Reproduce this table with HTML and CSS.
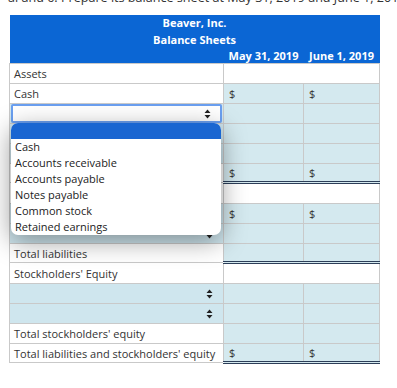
FILE: index.html
```html
<!DOCTYPE html>
<html>
<head>
<meta charset="utf-8">
<link rel="stylesheet" href="styles.css">
</head>
<body>
<div class="leadwrap"><p class="lead">al and 6. Prepare its balance sheet at May 31, 2019 and June 1, 2019.</p></div>
<div class="wrap">
  <table class="bs">
    <colgroup><col class="c1"><col class="c2"><col class="c3"></colgroup>
    <thead>
      <tr class="trow"><th colspan="3">Beaver, Inc.<br>Balance Sheets</th></tr>
      <tr class="drow"><th></th><th>May 31, 2019</th><th>June 1, 2019</th></tr>
    </thead>
    <tbody>
      <tr><td class="lbl">Assets</td><td colspan="2" class="blank"></td></tr>
      <tr><td class="lbl">Cash</td><td class="amt">$</td><td class="amt">$</td></tr>
      <tr><td class="sel"><div class="box focus"><svg class="arr" width="7" height="10" viewBox="0 0 7 10"><path d="M3.5 0.5L6.5 4H0.5Z M3.5 9.5L6.5 6H0.5Z" fill="#222"/></svg></div></td><td class="amt"></td><td class="amt"></td></tr>
      <tr><td class="sel"><div class="box"><svg class="arr" width="7" height="10" viewBox="0 0 7 10"><path d="M3.5 0.5L6.5 4H0.5Z M3.5 9.5L6.5 6H0.5Z" fill="#222"/></svg></div></td><td class="amt"></td><td class="amt"></td></tr>
      <tr><td class="sel"><div class="box"><svg class="arr" width="7" height="10" viewBox="0 0 7 10"><path d="M3.5 0.5L6.5 4H0.5Z M3.5 9.5L6.5 6H0.5Z" fill="#222"/></svg></div></td><td class="amt"></td><td class="amt"></td></tr>
      <tr class="dr"><td class="lbl">Total assets</td><td class="amt tot dbl">$</td><td class="amt tot dbl">$</td></tr>
      <tr><td class="lbl">Liabilities</td><td colspan="2" class="blank"></td></tr>
      <tr><td class="sel"><div class="box"><svg class="arr" width="7" height="10" viewBox="0 0 7 10"><path d="M3.5 0.5L6.5 4H0.5Z M3.5 9.5L6.5 6H0.5Z" fill="#222"/></svg></div></td><td class="amt">$</td><td class="amt">$</td></tr>
      <tr><td class="sel"><div class="box"><svg class="arr" width="7" height="10" viewBox="0 0 7 10"><path d="M3.5 0.5L6.5 4H0.5Z M3.5 9.5L6.5 6H0.5Z" fill="#222"/></svg></div></td><td class="amt"></td><td class="amt"></td></tr>
      <tr class="dr"><td class="lbl">Total liabilities</td><td class="amt tot dbl"></td><td class="amt tot dbl"></td></tr>
      <tr><td class="lbl">Stockholders' Equity</td><td colspan="2" class="blank"></td></tr>
      <tr><td class="sel"><div class="box"><svg class="arr" width="7" height="10" viewBox="0 0 7 10"><path d="M3.5 0.5L6.5 4H0.5Z M3.5 9.5L6.5 6H0.5Z" fill="#222"/></svg></div></td><td class="amt"></td><td class="amt"></td></tr>
      <tr><td class="sel"><div class="box"><svg class="arr" width="7" height="10" viewBox="0 0 7 10"><path d="M3.5 0.5L6.5 4H0.5Z M3.5 9.5L6.5 6H0.5Z" fill="#222"/></svg></div></td><td class="amt tot"></td><td class="amt tot"></td></tr>
      <tr><td class="lbl">Total stockholders' equity</td><td class="amt tot"></td><td class="amt tot"></td></tr>
      <tr class="dr"><td class="lbl">Total liabilities and stockholders' equity</td><td class="amt tot dbl">$</td><td class="amt tot dbl">$</td></tr>
    </tbody>
  </table>
  <div class="menu">
    <div class="opt hl">&nbsp;</div>
    <div class="opt">Cash</div>
    <div class="opt">Accounts receivable</div>
    <div class="opt">Accounts payable</div>
    <div class="opt">Notes payable</div>
    <div class="opt">Common stock</div>
    <div class="opt">Retained earnings</div>
  </div>
</div>
</body>
</html>
```

FILE: styles.css
```css
html, body {
  margin: 0;
  padding: 0;
  background: #fff;
}
body {
  font-family: "Open Sans", sans-serif;
  color: #333;
  overflow: hidden;
}
.leadwrap {
  height: 7px;
  overflow: hidden;
  width: 397px;
}
.lead {
  margin: -11px 0 0 8px;
  font-size: 12.6px;
  line-height: 18px;
  white-space: nowrap;
  color: #333;
}
.wrap {
  position: relative;
  margin: 8px 0 0 9px;
  width: 370px;
}
.bs {
  border-collapse: collapse;
  table-layout: fixed;
  width: 370px;
  font-size: 11px;
}
.c1 { width: 214px; }
.c2 { width: 80px; }
.c3 { width: 76px; }
.bs thead th {
  background: #0b66d4;
  color: #fff;
  font-weight: 700;
  font-size: 11px;
  padding: 0;
  border: none;
}
.trow th {
  height: 33px;
  line-height: 16.5px;
  text-align: center;
  vertical-align: bottom;
}
.drow th {
  height: 15px;
  line-height: 15px;
  text-align: center;
  vertical-align: top;
}
.bs td {
  border: 1px solid #c9c9c9;
  height: 19px;
  padding: 0 4px;
  line-height: 19px;
  white-space: nowrap;
}
.bs tr.dr td {
  height: 17px;
  line-height: 17px;
}
.lbl { background: #fff; color: #333; }
.blank { background: #fff; }
.amt { background: #d4e9ef; padding-left: 5px !important; }
.tot { border-top: 1px solid #111 !important; }
.dbl { border-bottom: 3px double #2c3e58 !important; }
.bs td.sel {
  background: #cfe6ee;
  padding: 0;
}
.box {
  height: 19px;
  display: flex;
  align-items: center;
  justify-content: flex-end;
  padding-right: 10px;
  box-sizing: border-box;
}
.box.focus {
  background: #fff;
  border: 2px solid #6a9ff0;
  border-radius: 2px;
  margin: 0 1px;
  padding-right: 9px;
}
.arr { display: block; }
.menu {
  position: absolute;
  left: 2px;
  top: 108px;
  width: 210px;
  background: #fff;
  border-radius: 7px;
  overflow: hidden;
  box-shadow: 0 6px 26px rgba(0, 0, 0, 0.4);
  font-size: 11px;
  color: #222;
}
.opt {
  height: 16px;
  line-height: 16px;
  padding-left: 4px;
}
.opt.hl {
  background: #1a66d1;
}
```
